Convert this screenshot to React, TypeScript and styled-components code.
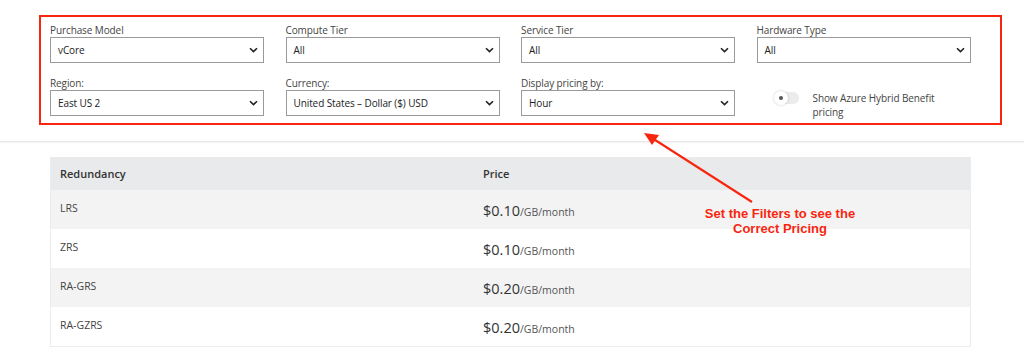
import * as React from "react";
import styled, { createGlobalStyle } from "styled-components";

const GlobalStyle = createGlobalStyle`
  html, body {
    margin: 0;
    padding: 0;
    background: #ffffff;
  }
  body {
    font-family: "Open Sans", "Noto Sans", sans-serif;
    color: #333;
  }
`;

type Filter = { label: string; value: string };

const row1: Filter[] = [
  { label: "Purchase Model", value: "vCore" },
  { label: "Compute Tier", value: "All" },
  { label: "Service Tier", value: "All" },
  { label: "Hardware Type", value: "All" },
];

const row2: Filter[] = [
  { label: "Region:", value: "East US 2" },
  { label: "Currency:", value: "United States – Dollar ($) USD" },
  { label: "Display pricing by:", value: "Hour" },
];

const prices = [
  { name: "LRS", price: "$0.10" },
  { name: "ZRS", price: "$0.10" },
  { name: "RA-GRS", price: "$0.20" },
  { name: "RA-GZRS", price: "$0.20" },
];

const Chevron = () => (
  <svg width="9" height="6" viewBox="0 0 9 6">
    <path d="M1 1.2 L4.5 4.6 L8 1.2" fill="none" stroke="#222" strokeWidth="1.6" />
  </svg>
);

const Dropdown: React.FC<Filter> = ({ label, value }) => (
  <Field>
    <Label>{label}</Label>
    <SelectBox>
      <span>{value}</span>
      <Chevron />
    </SelectBox>
  </Field>
);

export default function App() {
  return (
    <Page>
      <GlobalStyle />
      <FilterSection>
        <Highlight>
          <FilterGrid>
            {row1.map((f) => (
              <Dropdown key={f.label} {...f} />
            ))}
            {row2.map((f) => (
              <Dropdown key={f.label} {...f} />
            ))}
            <ToggleCell>
              <Toggle>
                <Knob />
              </Toggle>
              <ToggleText>Show Azure Hybrid Benefit pricing</ToggleText>
            </ToggleCell>
          </FilterGrid>
        </Highlight>
      </FilterSection>

      <TableArea>
        <Table>
          <HeadRow>
            <HeadCell>Redundancy</HeadCell>
            <HeadCell>Price</HeadCell>
          </HeadRow>
          {prices.map((p, i) => (
            <BodyRow key={p.name} striped={i % 2 === 0}>
              <NameCell>{p.name}</NameCell>
              <PriceCell>
                <Amount>{p.price}</Amount>
                <Unit>/GB/month</Unit>
              </PriceCell>
            </BodyRow>
          ))}
        </Table>

        <Note>
          <svg width="120" height="80" viewBox="0 0 120 80">
            <line x1="112" y1="72" x2="12" y2="8" stroke="#f8260f" strokeWidth="2.2" />
            <path d="M4 3 L19 5 L12 15 Z" fill="#f8260f" />
          </svg>
          <NoteText>
            Set the Filters to see the
            <br />
            Correct Pricing
          </NoteText>
        </Note>
      </TableArea>
    </Page>
  );
}

const Page = styled.div`
  width: 1024px;
  height: 361px;
  overflow: hidden;
  position: relative;
`;

const FilterSection = styled.section`
  height: 141px;
  box-sizing: border-box;
  padding: 15px 0 0 39px;
  background: #fff;
  box-shadow: 0 1px 2px rgba(0, 0, 0, 0.13);
  position: relative;
  z-index: 1;
`;

const Highlight = styled.div`
  width: 963px;
  height: 110px;
  box-sizing: border-box;
  border: 2px solid #f8260f;
  padding: 7px 30px 7px 9px;
`;

const FilterGrid = styled.div`
  display: grid;
  grid-template-columns: repeat(4, 214px);
  column-gap: 21.5px;
  row-gap: 14px;
  letter-spacing: -0.1px;
`;

const Field = styled.div`
  display: flex;
  flex-direction: column;
`;

const Label = styled.label`
  font-size: 10px;
  line-height: 13px;
  color: #444;
`;

const SelectBox = styled.div`
  height: 26px;
  box-sizing: border-box;
  border: 1px solid #9a9a9a;
  display: flex;
  align-items: center;
  justify-content: space-between;
  padding: 0 5px 0 7px;
  font-size: 10px;
  color: #222;
  background: #fff;
`;

const ToggleCell = styled.div`
  display: flex;
  align-items: flex-start;
  padding: 14px 0 0 17px;
`;

const Toggle = styled.div`
  width: 25px;
  height: 14px;
  position: relative;
  flex-shrink: 0;
  &::before {
    content: "";
    position: absolute;
    left: 5px;
    right: 0;
    top: 1px;
    height: 12px;
    border-radius: 6px;
    background: #ececec;
  }
`;

const Knob = styled.div`
  position: absolute;
  left: 0;
  top: 0;
  width: 14px;
  height: 14px;
  border-radius: 50%;
  background: #fff;
  box-shadow: 0 0 3px rgba(0, 0, 0, 0.2);
  &::after {
    content: "";
    position: absolute;
    left: 5px;
    top: 5px;
    width: 4px;
    height: 4px;
    border-radius: 50%;
    background: #555;
  }
`;

const ToggleText = styled.div`
  margin-left: 14px;
  width: 135px;
  font-size: 10px;
  line-height: 14px;
  color: #444;
`;

const TableArea = styled.div`
  padding: 16px 0 0 50px;
`;

const Table = styled.div`
  width: 919px;
  border: 1px solid #ececec;
  border-top: none;
`;

const HeadRow = styled.div`
  display: grid;
  grid-template-columns: 423px 1fr;
  height: 33px;
  align-items: center;
  background: #e9eaec;
`;

const HeadCell = styled.div`
  padding-left: 9px;
  font-size: 11px;
  font-weight: 600;
  color: #333;
`;

const BodyRow = styled.div<{ striped: boolean }>`
  display: grid;
  grid-template-columns: 423px 1fr;
  height: 39px;
  align-items: center;
  background: ${(p) => (p.striped ? "#f3f3f4" : "#fff")};
`;

const NameCell = styled.div`
  padding: 0 0 4px 9px;
  font-size: 10.5px;
  color: #444;
`;

const PriceCell = styled.div`
  padding: 2px 0 0 9px;
  display: flex;
  align-items: baseline;
`;

const Amount = styled.span`
  font-size: 14.5px;
  color: #333;
`;

const Unit = styled.span`
  font-size: 10.5px;
  color: #555;
`;

const Note = styled.div`
  position: absolute;
  left: 640px;
  top: 130px;
  width: 240px;
  z-index: 2;
  svg {
    display: block;
  }
`;

const NoteText = styled.div`
  position: absolute;
  left: 60px;
  top: 76px;
  width: 160px;
  text-align: center;
  font-family: "Liberation Sans", Arial, sans-serif;
  font-weight: bold;
  font-size: 13px;
  line-height: 15px;
  color: #f8260f;
`;
